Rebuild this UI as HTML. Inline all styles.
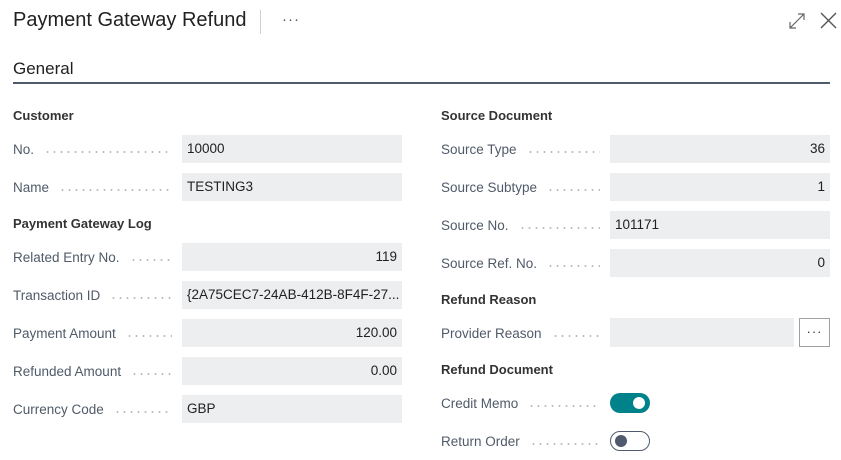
<!DOCTYPE html>
<html><head><style>
body{margin:0;width:841px;height:460px;background:#fff;font-family:"Liberation Sans",sans-serif;position:relative;overflow:hidden;color:#212121}
.a{position:absolute;white-space:nowrap}
.t{left:13px;top:9px;font-size:20px;color:#212121}
.h{font-size:13px;font-weight:bold;color:#333}
.l{font-size:13.5px;color:#505a68;display:flex;align-items:center}
.l span.d{flex:1;margin:0 4px 0 10px;height:2px;position:relative;top:2px;background-image:radial-gradient(circle,#b8bcc2 0.9px,transparent 1.1px);background-size:7px 2px;background-repeat:repeat-x}
.f{background:#eceeef;height:28px;font-size:13.5px;line-height:28px;padding:0 5px;box-sizing:border-box;color:#212121}
.r{text-align:right}
</style></head><body>
<div class="a t">Payment Gateway Refund</div>
<div class="a" style="left:260px;top:10px;width:1px;height:24px;background:#d0d0d0"></div>
<div class="a" style="left:282px;top:11px;font-size:15px;color:#555;letter-spacing:1px">···</div>
<svg class="a" style="left:788px;top:12px" width="18" height="18" viewBox="0 0 18 18" fill="none" stroke="#666" stroke-width="1.2"><path d="M2 16L16 2M10 2h6v6M2 10v6h6"/></svg>
<svg class="a" style="left:820px;top:12px" width="17" height="17" viewBox="0 0 17 17" fill="none" stroke="#555" stroke-width="1.4"><path d="M1 1L16 16M16 1L1 16"/></svg>
<div class="a" style="left:13px;top:59px;font-size:17px;color:#212121">General</div>
<div class="a" style="left:13px;top:82px;width:817px;height:2px;background:#505a6e"></div>

<div class="a h" style="left:13px;top:108px">Customer</div>
<div class="a h" style="left:13px;top:216px">Payment Gateway Log</div>
<div class="a h" style="left:441px;top:108px">Source Document</div>
<div class="a h" style="left:441px;top:292px">Refund Reason</div>
<div class="a h" style="left:441px;top:362px">Refund Document</div>

<div class="a l" style="left:13px;top:142px;width:163px">No.<span class="d"></span></div>
<div class="a f" style="left:182px;top:135px;width:220px">10000</div>
<div class="a l" style="left:13px;top:180px;width:163px">Name<span class="d"></span></div>
<div class="a f" style="left:182px;top:173px;width:220px">TESTING3</div>
<div class="a l" style="left:13px;top:250px;width:163px">Related Entry No.<span class="d"></span></div>
<div class="a f r" style="left:182px;top:243px;width:220px">119</div>
<div class="a l" style="left:13px;top:288px;width:163px">Transaction ID<span class="d"></span></div>
<div class="a f" style="left:182px;top:281px;width:220px">{2A75CEC7-24AB-412B-8F4F-27...</div>
<div class="a l" style="left:13px;top:326px;width:163px">Payment Amount<span class="d"></span></div>
<div class="a f r" style="left:182px;top:319px;width:220px">120.00</div>
<div class="a l" style="left:13px;top:364px;width:163px">Refunded Amount<span class="d"></span></div>
<div class="a f r" style="left:182px;top:357px;width:220px">0.00</div>
<div class="a l" style="left:13px;top:402px;width:163px">Currency Code<span class="d"></span></div>
<div class="a f" style="left:182px;top:395px;width:220px">GBP</div>

<div class="a l" style="left:441px;top:142px;width:163px">Source Type<span class="d"></span></div>
<div class="a f r" style="left:610px;top:135px;width:220px">36</div>
<div class="a l" style="left:441px;top:180px;width:163px">Source Subtype<span class="d"></span></div>
<div class="a f r" style="left:610px;top:173px;width:220px">1</div>
<div class="a l" style="left:441px;top:218px;width:163px">Source No.<span class="d"></span></div>
<div class="a f" style="left:610px;top:211px;width:220px">101171</div>
<div class="a l" style="left:441px;top:256px;width:163px">Source Ref. No.<span class="d"></span></div>
<div class="a f r" style="left:610px;top:249px;width:220px">0</div>
<div class="a l" style="left:441px;top:326px;width:163px">Provider Reason<span class="d"></span></div>
<div class="a f" style="left:610px;top:318px;width:184px;height:29px"></div>
<div class="a" style="left:799px;top:318px;width:29px;height:27px;border:1px solid #a0a0a0;text-align:center;font-size:13px;line-height:25px;color:#333;letter-spacing:1px">···</div>
<div class="a l" style="left:441px;top:396px;width:163px">Credit Memo<span class="d"></span></div>
<div class="a" style="left:610px;top:393px;width:40px;height:20px;border-radius:10px;background:#00828a"></div>
<div class="a" style="left:633px;top:397px;width:12px;height:12px;border-radius:6px;background:#fff"></div>
<div class="a l" style="left:441px;top:434px;width:163px">Return Order<span class="d"></span></div>
<div class="a" style="left:610px;top:431px;width:38px;height:18px;border-radius:10px;border:1px solid #505a6e;background:#fff"></div>
<div class="a" style="left:615px;top:435px;width:12px;height:12px;border-radius:6px;background:#505a6e"></div>
</body></html>
